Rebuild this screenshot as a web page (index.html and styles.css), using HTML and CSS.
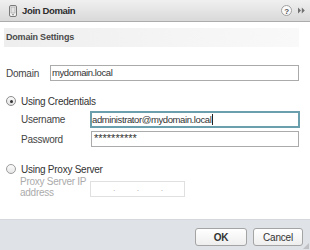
FILE: index.html
```html
<!DOCTYPE html>
<html>
<head>
<meta charset="utf-8">
<link rel="stylesheet" href="styles.css">
</head>
<body>
<div class="dialog">
  <div class="titlebar">
    <svg class="ticon" width="8" height="12" viewBox="0 0 8 12">
      <rect x="0.5" y="0.5" width="7" height="11" rx="1.5" fill="#f2f2f2" stroke="#7a7a7a"/>
      <rect x="2" y="2" width="4" height="6" fill="#e4e4e4" stroke="#9a9a9a" stroke-width="0.6"/>
      <rect x="3" y="9.2" width="2" height="1" fill="#8a8a8a"/>
    </svg>
    <span class="ttext">Join Domain</span>
    <span class="tspacer"></span>
    <svg class="help" width="11" height="11" viewBox="0 0 11 11">
      <circle cx="5.5" cy="5.5" r="5" fill="#fafafa" stroke="#a0a0a0"/>
      <text x="5.5" y="8.5" text-anchor="middle" font-family="Liberation Sans, Arial, sans-serif" font-size="8" font-weight="bold" fill="#555">?</text>
    </svg>
    <svg class="expand" width="7" height="7" viewBox="0 0 7 7">
      <path d="M0 0.5 L3 3.5 L0 6.5 Z M3.8 0.5 L6.8 3.5 L3.8 6.5 Z" fill="#707070"/>
    </svg>
  </div>
  <div class="body">
    <div class="section-head">Domain Settings</div>
    <div class="row domain-row">
      <span class="label lbl-domain">Domain</span>
      <div class="input wide">mydomain.local</div>
    </div>
    <div class="radio-row cred">
      <span class="radio on"></span>
      <span class="rtext">Using Credentials</span>
    </div>
    <div class="row user-row">
      <span class="label lbl-sub">Username</span>
      <div class="input focus">administrator@mydomain.local<span class="caret"></span></div>
    </div>
    <div class="row pw-row">
      <span class="label lbl-sub">Password</span>
      <div class="input pass">**********</div>
    </div>
    <div class="radio-row proxy">
      <span class="radio"></span>
      <span class="rtext">Using Proxy Server</span>
    </div>
    <div class="proxy-sub">
      <span class="label lbl-proxy">Proxy Server IP<br>address</span>
      <div class="ipbox"><span>.</span><span>.</span><span>.</span></div>
    </div>
  </div>
  <div class="footer">
    <button class="btn ok">OK</button>
    <button class="btn cancel">Cancel</button>
    <span class="grip"></span>
  </div>
</div>
</body>
</html>
```
FILE: styles.css
```css
html, body {
  margin: 0;
  padding: 0;
  background: #fff;
}
.dialog {
  width: 310px;
  height: 250px;
  display: flex;
  flex-direction: column;
  font-family: "Liberation Sans", Arial, sans-serif;
  font-size: 10px;
  letter-spacing: -0.25px;
  color: #444;
  position: relative;
  overflow: hidden;
}
.titlebar {
  flex: none;
  display: flex;
  align-items: center;
  background: linear-gradient(#f0f0f0, #d9d9d9);
  border-bottom: 1px solid #acacac;
  padding: 0 5px 0 9px;
  box-sizing: border-box;
  height: 22px;
}
.ticon { margin-right: 5px; }
.ttext {
  font-weight: bold;
  font-size: 9.5px;
  letter-spacing: -0.35px;
  color: #2c2c2c;
}
.tspacer { flex: 1; }
.help { margin-right: 6px; }
.body {
  flex: 1;
  padding-top: 6px;
}
.section-head {
  margin: 0 11px 0 4px;
  height: 19px;
  line-height: 19px;
  padding-left: 2px;
  font-weight: bold;
  font-size: 9px;
  letter-spacing: -0.2px;
  color: #4a4a4a;
  background: linear-gradient(to right, #eeeeee, #f5f5f5 60%, #f9f9f9);
}
.row {
  display: flex;
  align-items: center;
}
.label { color: #444; }
.domain-row {
  margin-top: 18px;
  padding-left: 6px;
}
.lbl-domain { width: 44px; }
.input {
  height: 16px;
  box-sizing: border-box;
  border: 1px solid #ababab;
  line-height: 14px;
  padding-left: 1px;
  color: #333;
  background: #fff;
  font-size: 9.5px;
  letter-spacing: -0.4px;
  white-space: nowrap;
}
.wide { width: 249px; }
.radio-row {
  display: flex;
  align-items: center;
  height: 12px;
  padding-left: 6px;
}
.cred { margin-top: 14px; }
.radio {
  width: 8px;
  height: 8px;
  border: 1px solid #8c8c8c;
  border-radius: 50%;
  background: linear-gradient(#fbfbfb, #e0e0e0);
  margin-right: 5px;
  position: relative;
}
.radio.on::after {
  content: "";
  position: absolute;
  left: 2.5px;
  top: 2.5px;
  width: 3px;
  height: 3px;
  border-radius: 50%;
  background: #333;
}
.rtext { color: #333; }
.user-row {
  margin-top: 4px;
  padding-left: 21px;
}
.lbl-sub { width: 69px; }
.focus {
  width: 210px;
  height: 17px;
  border: 2px solid #6b9fad;
  line-height: 13px;
  padding-left: 0;
}
.caret {
  display: inline-block;
  width: 1px;
  height: 11px;
  background: #222;
  vertical-align: -2px;
  margin-left: 0.5px;
}
.pw-row {
  margin-top: 3px;
  padding-left: 21px;
}
.pass {
  width: 208px;
  margin-left: 1px;
  font-size: 11px;
  letter-spacing: 0;
  line-height: 12px;
  padding-left: 2px;
}
.proxy { margin-top: 16px; }
.proxy .radio {
  background: linear-gradient(#fbfbfb, #e6e6e6);
  border-color: #9c9c9c;
}
.proxy-sub {
  display: flex;
  align-items: flex-start;
  padding-left: 20px;
  margin-top: 1px;
}
.lbl-proxy {
  width: 70px;
  color: #ababab;
  line-height: 11px;
  white-space: nowrap;
}
.ipbox {
  width: 95px;
  height: 16px;
  box-sizing: border-box;
  border: 1px solid #e0e0e0;
  margin-top: 5px;
  display: flex;
  justify-content: space-between;
  padding: 0 21px 0 22px;
  color: #b8b8b8;
  font-size: 9px;
  line-height: 12px;
}
.footer {
  flex: none;
  height: 31px;
  background: #dfe2e6;
  border-top: 1px solid #d4d7db;
  display: flex;
  justify-content: flex-end;
  align-items: flex-start;
  gap: 6px;
  padding: 8px 7px 0 0;
  box-sizing: border-box;
  position: relative;
}
.btn {
  height: 18px;
  box-sizing: border-box;
  border: 1px solid #a4a4a4;
  border-radius: 3px;
  background: linear-gradient(#ffffff, #eeeeee);
  font-family: "Liberation Sans", Arial, sans-serif;
  font-size: 10px;
  letter-spacing: -0.2px;
  color: #333;
  padding: 0;
}
.ok { width: 52px; font-weight: bold; }
.cancel { width: 50px; }
.grip {
  position: absolute;
  right: 1px;
  bottom: 1px;
  width: 6px;
  height: 6px;
  background:
    radial-gradient(circle, #999 0.6px, transparent 0.8px) 0 0 / 2px 2px;
  clip-path: polygon(100% 0, 100% 100%, 0 100%);
}
```
